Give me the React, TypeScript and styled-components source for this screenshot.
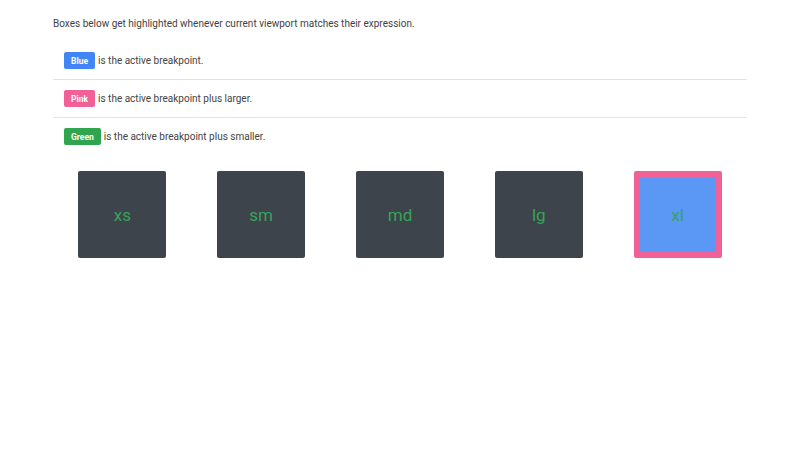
import React from "react";
import styled, { createGlobalStyle } from "styled-components";

const Global = createGlobalStyle`
  html, body { margin: 0; padding: 0; background: #fff; }
  body { font-family: Roboto, "Noto Sans", "Liberation Sans", sans-serif; color: #444; }
`;

const Page = styled.div`
  padding: 15px 53px 0 53px;
  width: 694px;
`;

const Intro = styled.p`
  margin: 0 0 10px 0;
  font-size: 10px;
  line-height: 17px;
  color: #3f3f3f;
`;

const List = styled.div`
  display: flex;
  flex-direction: column;
`;

const Row = styled.div<{ $last?: boolean }>`
  display: flex;
  align-items: center;
  gap: 3px;
  height: 37px;
  padding-left: 11px;
  font-size: 10px;
  color: #444;
  border-bottom: ${(p) => (p.$last ? "none" : "1px solid #e2e2e2")};
`;

const Badge = styled.span<{ $bg: string }>`
  display: inline-flex;
  align-items: center;
  justify-content: center;
  height: 17px;
  padding: 0 7px;
  border-radius: 2px;
  background: ${(p) => p.$bg};
  color: #fff;
  font-size: 8.5px;
  font-weight: 700;
`;

const Grid = styled.div`
  margin-top: 16px;
  display: grid;
  grid-template-columns: repeat(5, 1fr);
  justify-items: center;
`;

const Box = styled.div<{ $active?: boolean }>`
  box-sizing: border-box;
  width: 88px;
  height: 87px;
  border-radius: 2px;
  background: ${(p) => (p.$active ? "#5b97f5" : "#3e444c")};
  border: ${(p) => (p.$active ? "6px solid #f06198" : "none")};
  display: flex;
  align-items: center;
  justify-content: center;
  color: #37a35a;
  font-size: 17px;
`;

const sizes = ["xs", "sm", "md", "lg", "xl"];

export default function App() {
  return (
    <>
      <Global />
      <Page>
        <Intro>Boxes below get highlighted whenever current viewport matches their expression.</Intro>
        <List>
          <Row>
            <Badge $bg="#4285f4">Blue</Badge> is the active breakpoint.
          </Row>
          <Row>
            <Badge $bg="#f06198">Pink</Badge> is the active breakpoint plus larger.
          </Row>
          <Row $last>
            <Badge $bg="#2fa64d">Green</Badge> is the active breakpoint plus smaller.
          </Row>
        </List>
        <Grid>
          {sizes.map((s) => (
            <Box key={s} $active={s === "xl"}>
              {s}
            </Box>
          ))}
        </Grid>
      </Page>
    </>
  );
}
